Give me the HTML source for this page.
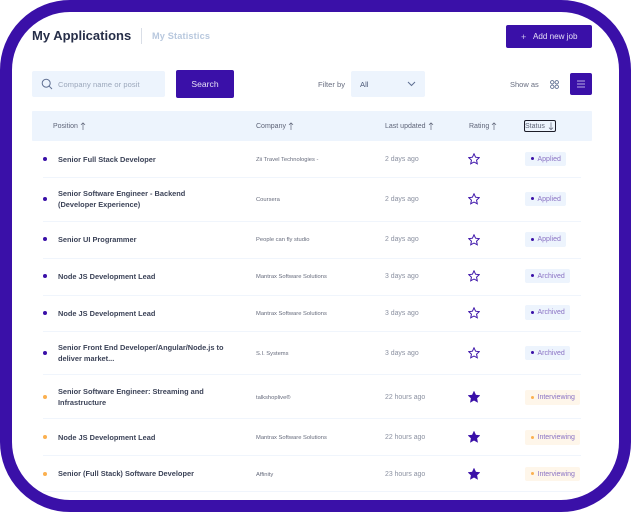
<!DOCTYPE html>
<html>
<head>
<meta charset="utf-8">
<style>
*{box-sizing:border-box;margin:0;padding:0}
html,body{width:631px;height:512px;overflow:hidden;background:#fff}
body{font-family:"Liberation Sans",sans-serif;position:relative}
#wrap{position:absolute;left:0;top:0;width:631px;height:512px;filter:blur(.25px)}
.a{position:absolute;white-space:nowrap}
#frame{left:0;top:0;width:631px;height:512px;border:12px solid #3a10a8;border-radius:70px;background:#fff}
.th{font-size:7px;color:#5e6478;line-height:10px;top:121.5px}
.ar2{top:121.5px}
.pos{left:58px;font-size:7.4px;font-weight:bold;color:#3c4358;line-height:11px}
.co{left:256px;font-size:5.8px;color:#666b7c;line-height:8px;margin-top:.5px}
.dt{left:385px;font-size:6.9px;color:#8b91a1;line-height:10px;margin-top:1px}
.d{left:43px;width:4px;height:4px;border-radius:50%}
.hr{left:43px;width:538px;height:1px;background:#f0f5fc}
.b{left:525px;height:14.5px;border-radius:2px;font-size:7px;line-height:15px;color:#8a72c4;padding-left:12.5px}
.b i{position:absolute;left:5.5px;top:5.8px;width:3px;height:3px;border-radius:50%}
.ap{width:41px;background:#edf4fd}.ap i{background:#3a10a8}
.ar{width:45px;background:#edf4fd}.ar i{background:#3a10a8}
.in{width:55px;background:#fef6ea}.in i{background:#fbb04f}
.st{left:468px;width:12px;height:12px}
svg{display:block}
</style>
</head>
<body>
<div id="wrap">
<div class="a" id="frame"></div>

<div class="a" style="left:32px;top:27px;font-size:13px;font-weight:bold;color:#262e48;line-height:18px">My Applications</div>
<div class="a" style="left:141px;top:28px;width:1px;height:16px;background:#d9dee7"></div>
<div class="a" style="left:152px;top:30px;font-size:9.2px;font-weight:bold;color:#b8c8de;line-height:12px;letter-spacing:.15px">My Statistics</div>

<div class="a" style="left:506px;top:25px;width:86px;height:23px;background:#3a10a8;border-radius:2px"></div>
<div class="a" style="left:521px;top:31px;font-size:9px;color:#cfc5ec;line-height:12px">+</div>
<div class="a" style="left:533px;top:31px;font-size:8.1px;color:#e6e0f6;line-height:12px">Add new job</div>

<div class="a" style="left:32px;top:71px;width:133px;height:26px;background:#edf4fd;border-radius:2px"></div>
<svg class="a" style="left:41px;top:78px" width="12" height="12" viewBox="0 0 12 12" fill="none" stroke="#5f6f92" stroke-width="1"><circle cx="5.2" cy="5.2" r="4"/><path d="M8.2 8.2L11 11"/></svg>
<div class="a" style="left:58px;top:79.5px;font-size:7.5px;color:#9aa6ba;line-height:10px;letter-spacing:.1px">Company name or posit</div>
<div class="a" style="left:176px;top:70px;width:58px;height:28px;background:#3a10a8;border-radius:2px;color:#e6e0f6;font-size:8.6px;line-height:28px;text-align:center">Search</div>

<div class="a" style="left:318px;top:79.5px;font-size:7.6px;color:#686e80;line-height:10px">Filter by</div>
<div class="a" style="left:351px;top:71px;width:74px;height:26px;background:#edf4fd;border-radius:2px"></div>
<div class="a" style="left:360px;top:79.5px;font-size:7.6px;color:#4c5a78;line-height:10px">All</div>
<svg class="a" style="left:407px;top:81px" width="9" height="6" viewBox="0 0 9 6" fill="none" stroke="#5f6f92" stroke-width="1"><path d="M1 1l3.5 3.5L8 1"/></svg>

<div class="a" style="left:510px;top:79.5px;font-size:7.5px;color:#686e80;line-height:10px">Show as</div>
<svg class="a" style="left:550px;top:80px" width="9" height="9" viewBox="0 0 10 10" fill="none" stroke="#5f6f92" stroke-width="1"><circle cx="2.5" cy="2.5" r="1.9"/><circle cx="7.5" cy="2.5" r="1.9"/><circle cx="2.5" cy="7.5" r="1.9"/><circle cx="7.5" cy="7.5" r="1.9"/></svg>
<div class="a" style="left:570px;top:73px;width:22px;height:22px;background:#3a10a8;border-radius:2px"></div>
<svg class="a" style="left:577px;top:80px" width="8" height="8" viewBox="0 0 8 8" stroke="#e6e0f6" stroke-width=".8"><path d="M0 1h8M0 4h8M0 7h8"/></svg>

<div class="a" style="left:32px;top:111px;width:560px;height:30px;background:#edf4fd;border-radius:1px"></div>
<div class="a th" style="left:53px">Position</div>
<svg class="a ar2" style="left:80px" width="6" height="8.5" viewBox="0 0 6 10" fill="none" stroke="#5e6478" stroke-width=".8"><path d="M3 9.5V1M.6 3.4L3 1l2.4 2.4"/></svg>
<div class="a th" style="left:256px">Company</div>
<svg class="a ar2" style="left:287.5px" width="6" height="8.5" viewBox="0 0 6 10" fill="none" stroke="#5e6478" stroke-width=".8"><path d="M3 9.5V1M.6 3.4L3 1l2.4 2.4"/></svg>
<div class="a th" style="left:385px">Last updated</div>
<svg class="a ar2" style="left:427.5px" width="6" height="8.5" viewBox="0 0 6 10" fill="none" stroke="#5e6478" stroke-width=".8"><path d="M3 9.5V1M.6 3.4L3 1l2.4 2.4"/></svg>
<div class="a th" style="left:469px">Rating</div>
<svg class="a ar2" style="left:490.5px" width="6" height="8.5" viewBox="0 0 6 10" fill="none" stroke="#5e6478" stroke-width=".8"><path d="M3 9.5V1M.6 3.4L3 1l2.4 2.4"/></svg>
<div class="a" style="left:524px;top:120px;width:32px;height:12px;border:1px solid #1c1c28;border-radius:2px"></div>
<div class="a th" style="left:525px">Status</div>
<svg class="a ar2" style="left:547.5px" width="6" height="8.5" viewBox="0 0 6 10" fill="none" stroke="#5e6478" stroke-width=".8"><path d="M3 .5V9M.6 6.6L3 9l2.4-2.4"/></svg>

<!-- Row 1 -->
<div class="a d" style="top:157px;background:#3a10a8"></div>
<div class="a pos" style="top:153.5px">Senior Full Stack Developer</div>
<div class="a co" style="top:155px">Zii Travel Technologies -</div>
<div class="a dt" style="top:154px">2 days ago</div>
<svg class="a st" style="top:153px" viewBox="1 1 22 22" fill="none" stroke="#3a10a8" stroke-width="1.8"><path d="M12 2.5l2.9 6.2 6.8.8-5 4.6 1.3 6.7-6-3.3-6 3.3 1.3-6.7-5-4.6 6.8-.8z"/></svg>
<div class="a b ap" style="top:151.5px"><i></i>Applied</div>
<div class="a hr" style="top:177px"></div>

<!-- Row 2 -->
<div class="a d" style="top:197px;background:#3a10a8"></div>
<div class="a pos" style="top:188px">Senior Software Engineer - Backend</div>
<div class="a pos" style="top:199px">(Developer Experience)</div>
<div class="a co" style="top:195px">Coursera</div>
<div class="a dt" style="top:194px">2 days ago</div>
<svg class="a st" style="top:193px" viewBox="1 1 22 22" fill="none" stroke="#3a10a8" stroke-width="1.8"><path d="M12 2.5l2.9 6.2 6.8.8-5 4.6 1.3 6.7-6-3.3-6 3.3 1.3-6.7-5-4.6 6.8-.8z"/></svg>
<div class="a b ap" style="top:191.5px"><i></i>Applied</div>
<div class="a hr" style="top:221px"></div>

<!-- Row 3 -->
<div class="a d" style="top:237px;background:#3a10a8"></div>
<div class="a pos" style="top:233.5px">Senior UI Programmer</div>
<div class="a co" style="top:235px">People can fly studio</div>
<div class="a dt" style="top:234px">2 days ago</div>
<svg class="a st" style="top:234px" viewBox="1 1 22 22" fill="none" stroke="#3a10a8" stroke-width="1.8"><path d="M12 2.5l2.9 6.2 6.8.8-5 4.6 1.3 6.7-6-3.3-6 3.3 1.3-6.7-5-4.6 6.8-.8z"/></svg>
<div class="a b ap" style="top:232px"><i></i>Applied</div>
<div class="a hr" style="top:258px"></div>

<!-- Row 4 -->
<div class="a d" style="top:274px;background:#3a10a8"></div>
<div class="a pos" style="top:270.5px">Node JS Development Lead</div>
<div class="a co" style="top:272px">Mantrax Software Solutions</div>
<div class="a dt" style="top:271px">3 days ago</div>
<svg class="a st" style="top:270px" viewBox="1 1 22 22" fill="none" stroke="#3a10a8" stroke-width="1.8"><path d="M12 2.5l2.9 6.2 6.8.8-5 4.6 1.3 6.7-6-3.3-6 3.3 1.3-6.7-5-4.6 6.8-.8z"/></svg>
<div class="a b ar" style="top:268.5px"><i></i>Archived</div>
<div class="a hr" style="top:295px"></div>

<!-- Row 5 -->
<div class="a d" style="top:311px;background:#3a10a8"></div>
<div class="a pos" style="top:307.5px">Node JS Development Lead</div>
<div class="a co" style="top:309px">Mantrax Software Solutions</div>
<div class="a dt" style="top:308px">3 days ago</div>
<svg class="a st" style="top:307px" viewBox="1 1 22 22" fill="none" stroke="#3a10a8" stroke-width="1.8"><path d="M12 2.5l2.9 6.2 6.8.8-5 4.6 1.3 6.7-6-3.3-6 3.3 1.3-6.7-5-4.6 6.8-.8z"/></svg>
<div class="a b ar" style="top:305px"><i></i>Archived</div>
<div class="a hr" style="top:331px"></div>

<!-- Row 6 -->
<div class="a d" style="top:351px;background:#3a10a8"></div>
<div class="a pos" style="top:342px">Senior Front End Developer/Angular/Node.js to</div>
<div class="a pos" style="top:353px">deliver market...</div>
<div class="a co" style="top:349px">S.I. Systems</div>
<div class="a dt" style="top:348px">3 days ago</div>
<svg class="a st" style="top:347px" viewBox="1 1 22 22" fill="none" stroke="#3a10a8" stroke-width="1.8"><path d="M12 2.5l2.9 6.2 6.8.8-5 4.6 1.3 6.7-6-3.3-6 3.3 1.3-6.7-5-4.6 6.8-.8z"/></svg>
<div class="a b ar" style="top:345.5px"><i></i>Archived</div>
<div class="a hr" style="top:374px"></div>

<!-- Row 7 -->
<div class="a d" style="top:395px;background:#fbb04f"></div>
<div class="a pos" style="top:386px">Senior Software Engineer: Streaming and</div>
<div class="a pos" style="top:397px">Infrastructure</div>
<div class="a co" style="top:393px">talkshoplive®</div>
<div class="a dt" style="top:392px">22 hours ago</div>
<svg class="a st" style="top:391px" viewBox="1 1 22 22" fill="#3a10a8" stroke="#3a10a8" stroke-width="1.8"><path d="M12 2.5l2.9 6.2 6.8.8-5 4.6 1.3 6.7-6-3.3-6 3.3 1.3-6.7-5-4.6 6.8-.8z"/></svg>
<div class="a b in" style="top:390px"><i></i>Interviewing</div>
<div class="a hr" style="top:418px"></div>

<!-- Row 8 -->
<div class="a d" style="top:435px;background:#fbb04f"></div>
<div class="a pos" style="top:431.5px">Node JS Development Lead</div>
<div class="a co" style="top:433px">Mantrax Software Solutions</div>
<div class="a dt" style="top:432px">22 hours ago</div>
<svg class="a st" style="top:431px" viewBox="1 1 22 22" fill="#3a10a8" stroke="#3a10a8" stroke-width="1.8"><path d="M12 2.5l2.9 6.2 6.8.8-5 4.6 1.3 6.7-6-3.3-6 3.3 1.3-6.7-5-4.6 6.8-.8z"/></svg>
<div class="a b in" style="top:430px"><i></i>Interviewing</div>
<div class="a hr" style="top:455px"></div>

<!-- Row 9 -->
<div class="a d" style="top:472px;background:#fbb04f"></div>
<div class="a pos" style="top:468px">Senior (Full Stack) Software Developer</div>
<div class="a co" style="top:470px">Affinity</div>
<div class="a dt" style="top:469px">23 hours ago</div>
<svg class="a st" style="top:468px" viewBox="1 1 22 22" fill="#3a10a8" stroke="#3a10a8" stroke-width="1.8"><path d="M12 2.5l2.9 6.2 6.8.8-5 4.6 1.3 6.7-6-3.3-6 3.3 1.3-6.7-5-4.6 6.8-.8z"/></svg>
<div class="a b in" style="top:466.5px"><i></i>Interviewing</div>
<div class="a hr" style="top:491px"></div>
</div>
</body>
</html>
